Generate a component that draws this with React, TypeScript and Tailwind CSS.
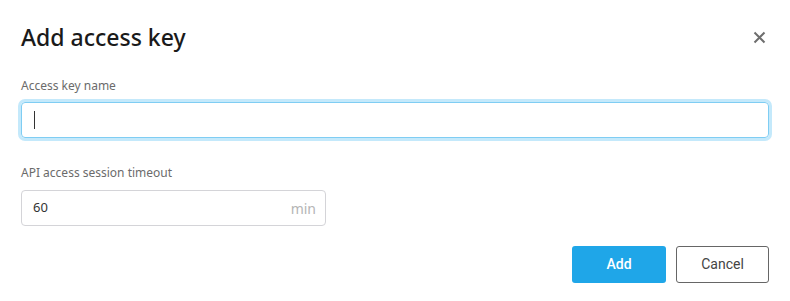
import React from "react";

export default function App() {
  return (
    <div
      className="w-[790px] h-[301px] bg-white px-[21px] overflow-hidden"
      style={{ fontFamily: '"Noto Sans", "Open Sans", sans-serif' }}
    >
      <div className="flex items-center justify-between mt-[21px] h-[32px]">
        <h1 className="text-[23px] leading-[32px] text-[#1a1a1a] font-medium">Add access key</h1>
        <button className="mr-[2px] w-[16px] h-[16px] flex items-center justify-center text-[#6e6e6e]">
          <svg width="13" height="13" viewBox="0 0 13 13">
            <path d="M1.5 1.5 L11.5 11.5 M11.5 1.5 L1.5 11.5" stroke="currentColor" strokeWidth="2" fill="none" />
          </svg>
        </button>
      </div>

      <label className="block mt-[25px] text-[12px] leading-[16px] text-[#6b6b6b]">Access key name</label>
      <div className="mt-[8px] h-[36px] w-full rounded-[4px] border border-[#7fcdf3] ring-[3px] ring-[#c4e9fb] flex items-center px-[12px]">
        <span className="w-px h-[18px] bg-[#333]"></span>
      </div>

      <label className="block mt-[27px] text-[12px] leading-[16px] text-[#6b6b6b]">API access session timeout</label>
      <div className="mt-[9px] h-[36px] w-[305px] rounded-[4px] border border-[#d4d4d8] flex items-center justify-between pl-[11px] pr-[9px]">
        <span className="text-[13px] text-[#333]">60</span>
        <span className="text-[14px] text-[#b5b5b5]">min</span>
      </div>

      <div className="flex justify-end gap-[10px] mt-[20px]" style={{ fontFamily: 'Roboto, "Noto Sans", sans-serif' }}>
        <button className="w-[94px] h-[37px] rounded-[3px] bg-[#1fa6e8] text-white text-[14px] font-medium">Add</button>
        <button className="w-[93px] h-[37px] rounded-[3px] border border-[#666] text-[#444] text-[14px] bg-white">Cancel</button>
      </div>
    </div>
  );
}
